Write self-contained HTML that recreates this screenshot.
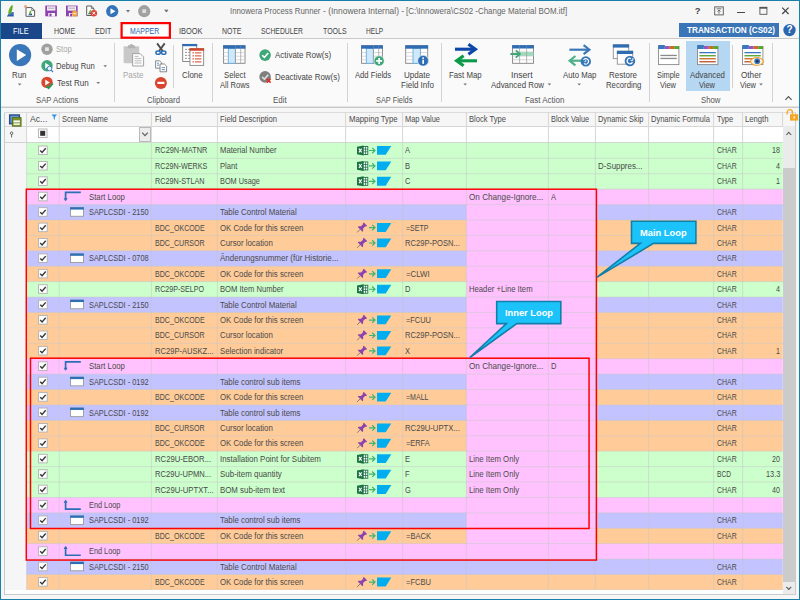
<!DOCTYPE html>
<html><head><meta charset="utf-8"><title>Innowera Process Runner</title>
<style>
html,body{margin:0;padding:0;}
body{width:800px;height:600px;overflow:hidden;position:relative;background:#f4f4f4;font-family:"Liberation Sans",sans-serif;}
#w{position:absolute;left:0;top:0;width:800px;height:600px;overflow:hidden;}
#w div,#w svg,#w span.t{position:absolute;}
#w span.t{white-space:nowrap;transform-origin:0 50%;}
#w svg{overflow:visible;}
</style></head><body><div id="w">
<div style="left:0px;top:0px;width:800px;height:600px;background:#f6f6f6;"></div>
<div style="left:1px;top:39.3px;width:798px;height:67px;background:#fafafa;"></div>
<div style="left:1px;top:38.4px;width:798px;height:0.9px;background:#c9c9c9;"></div>
<div style="left:1px;top:106px;width:798px;height:1px;background:#e4e4e4;"></div>
<div style="left:1px;top:107px;width:798px;height:1px;background:#c9c9c9;"></div>
<svg style="left:5px;top:3px;" width="12" height="16" viewBox="5 3 12 16"><path d="M6.8 16.5 L9.4 12.7 L13.7 12.1 V16.5 Z" fill="#2c5ca6"/><path d="M9 14.4 L13.7 13.6" stroke="#5f8fd0" stroke-width="0.7"/><path d="M8.1 13.4 C8.4 9.8 9.9 6.6 12.5 4.6 C12.9 7.8 12.2 11 10.5 13.9 Z" fill="#6ab42d"/><path d="M11.9 6.2 C11.7 8.8 10.8 11.4 9.6 13.4" stroke="#4a931c" stroke-width="0.7" fill="none"/></svg>
<svg style="left:23px;top:4px;" width="15" height="15" viewBox="23 4 15 15"><path d="M26 7.6 H31.8 L34.6 10.4 V16.3 H26 Z" fill="#fff" stroke="#5c5c5c" stroke-width="1"/><path d="M31.8 7.6 V10.4 H34.6" fill="none" stroke="#5c5c5c" stroke-width="0.8"/><path d="M28.2 15.2 L29.4 13.4 H32 V15.2 Z" fill="#2c5ca6"/><path d="M29 14 C29 12.2 29.9 10.8 31.2 10 C31.5 11.6 31.1 13 30.2 14.4 Z" fill="#6ab42d"/><path d="M24.2 5.2 L26.8 7.8 M26.8 5.2 L24.2 7.8 M25.5 4.8 V8.2 M23.9 6.5 H27.1" stroke="#f0906a" stroke-width="0.6"/></svg>
<svg style="left:45px;top:5px;" width="13" height="13" viewBox="-0.3 -0.6 13 13"><path d="M0 0 H11.6 V10.7 H0 Z" fill="#8c41ae"/><rect x="1.7" y="0.7" width="8.4" height="4.3" fill="#f3edf7"/><rect x="2.8" y="2" width="6.2" height="1.2" fill="#b5b5b5"/><rect x="2.9" y="7.4" width="6.8" height="3.3" fill="#f6f6f6"/><rect x="4.1" y="8" width="2.1" height="2.7" fill="#8c41ae"/></svg>
<svg style="left:66px;top:5px;" width="13" height="13" viewBox="0 -0.6 13 13"><path d="M0 0 H11.6 V10.7 H0 Z" fill="#8c41ae"/><rect x="1.7" y="0.7" width="8.4" height="4.3" fill="#f3edf7"/><rect x="2.8" y="2" width="6.2" height="1.2" fill="#b5b5b5"/><rect x="2.9" y="7.4" width="6.8" height="3.3" fill="#f6f6f6"/><rect x="4.1" y="8" width="2.1" height="2.7" fill="#8c41ae"/></svg>
<svg style="left:71px;top:10px;" width="8" height="8" viewBox="71 10 8 8"><rect x="72.2" y="10.6" width="4.9" height="5.8" rx="1.6" fill="#f1a437"/><rect x="73" y="12.9" width="3.3" height="1.3" fill="#fbe3b8"/></svg>
<svg style="left:85px;top:4px;" width="15" height="15" viewBox="85 4 15 15"><path d="M86.7 6 H91.4 L94 8.6 V15.5 H86.7 Z" fill="#fff" stroke="#5c5c5c" stroke-width="1"/><path d="M91.4 6 V8.6 H94" fill="none" stroke="#5c5c5c" stroke-width="0.8"/><path d="M88 14.2 L89 12.6 H91.2 V14.2 Z" fill="#2c5ca6"/><path d="M88.8 13.2 C88.8 11.6 89.6 10.2 90.8 9.4 C91.1 10.9 90.8 12.2 89.9 13.6 Z" fill="#6ab42d"/><circle cx="93.8" cy="13.2" r="3.3" fill="#dc4538"/><path d="M92.4 11.8 L95.2 14.6 M95.2 11.8 L92.4 14.6" stroke="#fff" stroke-width="1"/></svg>
<svg style="left:106px;top:5px;" width="14" height="14" viewBox="0 0 14 14"><circle cx="6.2" cy="6.2" r="6.1" fill="#3674b7"/><path d="M4.5 3.2 L9.4 6.2 L4.5 9.2 Z" fill="#fff"/></svg>
<svg style="left:125px;top:10px;" width="7" height="4" viewBox="-0.9 0 7 4"><path d="M0 0 H4.2 L2.1 2.4 Z" fill="#757575"/></svg>
<svg style="left:138px;top:5px;" width="14" height="14" viewBox="0 0 14 14"><circle cx="6.2" cy="6.2" r="6.1" fill="#a1a1a1"/><rect x="4.3" y="4.3" width="3.8" height="3.8" rx="0.4" fill="#dedede"/></svg>
<div style="left:164.3px;top:9px;width:4.2px;height:0.8px;background:#cdcdcd;"></div>
<svg style="left:164px;top:10px;" width="6" height="4" viewBox="-0.3 0 6 4"><path d="M0 0 H4.2 L2.1 2.4 Z" fill="#757575"/></svg>
<span class="t" style="left:229.5px;top:6.04px;font-size:8.6px;line-height:10.32px;color:#656565;transform:scaleX(0.9102);">Innowera Process Runner</span>
<span class="t" style="left:322.8px;top:6.04px;font-size:8.6px;line-height:10.32px;color:#656565;transform:scaleX(0.9820);">- (Innowera Internal) -</span>
<span class="t" style="left:406.25px;top:6.04px;font-size:8.6px;line-height:10.32px;color:#656565;transform:scaleX(0.9243);">[C:\Innowera\CS02 -Change Material BOM.itf]</span>
<span class="t" style="left:694.73px;top:4.66px;font-size:9.4px;line-height:11.28px;color:#444;transform:scaleX(1.0000);font-weight:bold;">?</span>
<svg style="left:714px;top:6px;" width="11" height="11" viewBox="-0.2 -0.4 11 11"><rect x="0.5" y="0.5" width="8.6" height="8" fill="none" stroke="#555" stroke-width="0.9"/><path d="M2.4 2.4 H7.2" stroke="#555" stroke-width="0.8"/><path d="M4.8 7.4 V3.6 M3.2 5.2 L4.8 3.6 L6.4 5.2" fill="none" stroke="#555" stroke-width="0.8"/></svg>
<div style="left:737.4px;top:12.2px;width:7.4px;height:1.1px;background:#4a4a4a;"></div>
<svg style="left:759px;top:6px;" width="10" height="10" viewBox="-0.4 -0.8 10 10"><rect x="0.5" y="0.5" width="7" height="7" fill="none" stroke="#555" stroke-width="0.9"/><rect x="0.3" y="0.2" width="7.4" height="1.7" fill="#555"/></svg>
<svg style="left:781px;top:7px;" width="10" height="9" viewBox="-0.6 0 10 9"><path d="M0.6 0.6 L7 7 M7 0.6 L0.6 7" stroke="#444" stroke-width="1.2"/></svg>
<div style="left:1px;top:22.6px;width:41px;height:16.2px;background:#19478a;"></div>
<span class="t" style="left:12.5px;top:26.24px;font-size:9.1px;line-height:10.92px;color:#fff;transform:scaleX(0.8117);">FILE</span>
<span class="t" style="left:53.8px;top:26.24px;font-size:9.1px;line-height:10.92px;color:#444444;transform:scaleX(0.7765);">HOME</span>
<span class="t" style="left:94.5px;top:26.24px;font-size:9.1px;line-height:10.92px;color:#444444;transform:scaleX(0.7863);">EDIT</span>
<div style="left:121px;top:23px;width:49px;height:15.4px;background:#fdfdfd;"></div>
<span class="t" style="left:130.3px;top:26.24px;font-size:9.1px;line-height:10.92px;color:#2a5fae;transform:scaleX(0.7598);">MAPPER</span>
<svg style="left:120px;top:22px;" width="52" height="18" viewBox="-0.5 0 52 18"><rect x="1.1" y="1.1" width="48.3" height="14.6" fill="none" stroke="#ff0000" stroke-width="2.2"/></svg>
<span class="t" style="left:179.3px;top:26.24px;font-size:9.1px;line-height:10.92px;color:#444444;transform:scaleX(0.8188);">IBOOK</span>
<span class="t" style="left:221.8px;top:26.24px;font-size:9.1px;line-height:10.92px;color:#444444;transform:scaleX(0.7674);">NOTE</span>
<span class="t" style="left:260.5px;top:26.24px;font-size:9.1px;line-height:10.92px;color:#444444;transform:scaleX(0.7483);">SCHEDULER</span>
<span class="t" style="left:322.5px;top:26.24px;font-size:9.1px;line-height:10.92px;color:#444444;transform:scaleX(0.7692);">TOOLS</span>
<span class="t" style="left:365.5px;top:26.24px;font-size:9.1px;line-height:10.92px;color:#444444;transform:scaleX(0.7235);">HELP</span>
<div style="left:679px;top:23px;width:100px;height:14.2px;background:#3a76b7;"></div>
<span class="t" style="left:687.2px;top:24.92px;font-size:8.8px;line-height:10.56px;color:#fff;transform:scaleX(0.9326);font-weight:bold;">TRANSACTION (CS02)</span>
<svg style="left:783px;top:23px;" width="14" height="15" viewBox="-0.2 -0.8 14 15"><circle cx="6.3" cy="6.3" r="6.2" fill="#2a67ae"/></svg>
<span class="t" style="left:786.45px;top:24.4px;font-size:10px;line-height:12px;color:#fff;transform:scaleX(1.0000);font-weight:bold;">?</span>
<div style="left:114px;top:43.2px;width:1px;height:58.4px;background:#d2d2d2;"></div>
<div style="left:212px;top:43.2px;width:1px;height:58.4px;background:#d2d2d2;"></div>
<div style="left:347.2px;top:43.2px;width:1px;height:58.4px;background:#d2d2d2;"></div>
<div style="left:441.2px;top:43.2px;width:1px;height:58.4px;background:#d2d2d2;"></div>
<div style="left:648.8px;top:43.2px;width:1px;height:58.4px;background:#d2d2d2;"></div>
<div style="left:771.7px;top:43.2px;width:1px;height:58.4px;background:#d2d2d2;"></div>
<div style="left:173px;top:45px;width:1px;height:42.5px;background:#d2d2d2;"></div>
<div style="left:731.5px;top:45px;width:1px;height:42.5px;background:#d2d2d2;"></div>
<span class="t" style="left:36.05px;top:94.86px;font-size:8.4px;line-height:10.08px;color:#555;transform:scaleX(0.9224);">SAP Actions</span>
<span class="t" style="left:146.5px;top:94.86px;font-size:8.4px;line-height:10.08px;color:#555;transform:scaleX(0.9178);">Clipboard</span>
<span class="t" style="left:273.3px;top:94.86px;font-size:8.4px;line-height:10.08px;color:#555;transform:scaleX(0.9534);">Edit</span>
<span class="t" style="left:376.25px;top:94.86px;font-size:8.4px;line-height:10.08px;color:#555;transform:scaleX(0.8817);">SAP Fields</span>
<span class="t" style="left:525.45px;top:94.86px;font-size:8.4px;line-height:10.08px;color:#555;transform:scaleX(0.9506);">Fast Action</span>
<span class="t" style="left:700.75px;top:94.86px;font-size:8.4px;line-height:10.08px;color:#555;transform:scaleX(0.9280);">Show</span>
<svg style="left:784px;top:95px;" width="10" height="7" viewBox="-0.8 -0.6 10 7"><path d="M0.6 4.2 L3.7 1 L6.8 4.2" fill="none" stroke="#555" stroke-width="1.2"/></svg>
<svg style="left:8px;top:43px;" width="25" height="25" viewBox="-0.8 -0.8 25 25"><circle cx="11.3" cy="11.3" r="11.1" fill="#3a77b9"/><path d="M8 5.4 L17.4 11.3 L8 17.2 Z" fill="#fff"/></svg>
<span class="t" style="left:11.6px;top:69.92px;font-size:8.8px;line-height:10.56px;color:#444444;transform:scaleX(0.8920);">Run</span>
<svg style="left:17px;top:83px;" width="6" height="4" viewBox="-0.8 -0.4 6 4"><path d="M0 0 H3.6 L1.8 2 Z" fill="#757575"/></svg>
<svg style="left:41px;top:43px;" width="13" height="13" viewBox="-0.2 -0.4 13 13"><circle cx="5.8" cy="5.8" r="5.7" fill="#a0a0a0"/><rect x="3.9" y="3.9" width="3.8" height="3.8" rx="0.4" fill="#e4e4e4"/></svg>
<span class="t" style="left:56.2px;top:44.12px;font-size:8.8px;line-height:10.56px;color:#a6a6a6;transform:scaleX(0.8617);">Stop</span>
<svg style="left:41px;top:60px;" width="14" height="14" viewBox="-0.2 0 14 14"><circle cx="5.8" cy="5.8" r="5.7" fill="#3fa77a"/><path d="M4 2.8 L8.6 5.8 L4 8.8 Z" fill="#fff" opacity="0.95"/><circle cx="8.3" cy="8.5" r="2.3" fill="#eaf2fb" stroke="#3a7ac0" stroke-width="0.9"/><path d="M10 10.2 L11.8 12" stroke="#3a7ac0" stroke-width="1.2"/></svg>
<span class="t" style="left:56.2px;top:60.72px;font-size:8.8px;line-height:10.56px;color:#444444;transform:scaleX(0.8715);">Debug Run</span>
<svg style="left:103px;top:65px;" width="6" height="4" viewBox="-0.4 -0.2 6 4"><path d="M0 0 H3.6 L1.8 2 Z" fill="#757575"/></svg>
<svg style="left:41px;top:76px;" width="14" height="15" viewBox="-0.2 -0.6 14 15"><circle cx="5.8" cy="5.8" r="5.7" fill="#d9472f"/><path d="M4 2.8 L8.6 5.8 L4 8.8 Z" fill="#fff" opacity="0.95"/><path d="M5 9.4 L7.4 11.6 L11.6 6.8" fill="none" stroke="#1e9e57" stroke-width="1.8"/></svg>
<span class="t" style="left:57px;top:77.52px;font-size:8.8px;line-height:10.56px;color:#444444;transform:scaleX(0.9099);">Test Run</span>
<svg style="left:96px;top:82px;" width="6" height="3" viewBox="-0.4 0 6 3"><path d="M0 0 H3.6 L1.8 2 Z" fill="#757575"/></svg>
<svg style="left:123px;top:43px;" width="24" height="25" viewBox="0 -0.6 24 25"><rect x="0.6" y="2.6" width="15.6" height="17" rx="1" fill="#c8c8c8"/><path d="M5 2.8 V1.6 H6.8 A1.7 1.7 0 0 1 10 1.6 H11.8 V2.8 L12.6 4.6 H4.2 Z" fill="#b3b3b3"/><path d="M9.6 10 H17.2 L20.6 13.4 V22.4 H9.6 Z" fill="#fbfbfb" stroke="#9a9a9a" stroke-width="0.9"/><path d="M11.6 15 H18.4 M11.6 17.2 H18.4 M11.6 19.4 H18.4 M11.6 12.8 H15.6" stroke="#ababab" stroke-width="0.8"/></svg>
<span class="t" style="left:123px;top:69.92px;font-size:8.8px;line-height:10.56px;color:#a6a6a6;transform:scaleX(0.9065);">Paste</span>
<svg style="left:155px;top:43px;" width="13" height="14" viewBox="-0.2 -0.2 13 14"><path d="M1.9 0.2 L7.5 7.8 M9.5 0.2 L3.9 7.8" stroke="#4d4d4d" stroke-width="1.9"/><ellipse cx="2.9" cy="9.5" rx="2.2" ry="1.6" fill="none" stroke="#2e6fb6" stroke-width="1.5"/><ellipse cx="8.5" cy="9.5" rx="2.2" ry="1.6" fill="none" stroke="#2e6fb6" stroke-width="1.5"/></svg>
<svg style="left:155px;top:60px;" width="14" height="14" viewBox="0 -0.2 14 14"><path d="M0.6 0.6 H4.6 L6.6 2.6 V8 H0.6 Z" fill="#fff" stroke="#7a7a7a" stroke-width="0.9"/><path d="M5 3.8 H9.4 L11.6 6 V11.6 H5 Z" fill="#fff" stroke="#7a7a7a" stroke-width="0.9"/><path d="M2 3 H4 M2 5 H4 M6.6 7.4 H10 M6.6 9.4 H10" stroke="#3a78bd" stroke-width="0.8"/></svg>
<svg style="left:154px;top:76px;" width="15" height="14" viewBox="-0.8 -0.8 15 14"><circle cx="6.1" cy="6.1" r="6" fill="#d9442e"/><rect x="2.6" y="5" width="7" height="2.2" fill="#fff"/></svg>
<svg style="left:181px;top:43px;" width="26" height="26" viewBox="181 43 26 26"><rect x="182.7" y="44.4" width="14" height="17" fill="#fff" stroke="#7a7a7a" stroke-width="0.9"/><rect x="182.25" y="44" width="14.9" height="2.2" fill="#2f6db3"/><path d="M185 49.4 H187 M188.2 49.4 H196 M185 52.4 H187 M188.2 52.4 H196 M185 55.4 H187 M188.2 55.4 H196 M185 58.4 H187 M188.2 58.4 H196" stroke="#8a8a8a" stroke-width="0.9"/><rect x="189.95" y="48.7" width="13.7" height="16.7" fill="#fff" stroke="#858585" stroke-width="0.9"/><rect x="189.5" y="48.25" width="14.6" height="2.5" fill="#cf4528"/><path d="M192.4 52.9 H194 M195 52.9 H201.4 M192.4 55.9 H194 M195 55.9 H201.4 M192.4 58.9 H194 M195 58.9 H201.4 M192.4 61.9 H194 M195 61.9 H201.4" stroke="#de6a54" stroke-width="1.3"/></svg>
<span class="t" style="left:182.1px;top:69.92px;font-size:8.8px;line-height:10.56px;color:#444444;transform:scaleX(0.8959);">Clone</span>
<svg style="left:223px;top:45px;" width="24" height="20" viewBox="-0.1 -0.2 24 20"><rect x="0.5" y="0.5" width="21.4" height="17.6" fill="#fff" stroke="#808080" stroke-width="0.9"/><path d="M0.5 7.4 H21.9 M0.5 11 H21.9 M0.5 14.6 H21.9" stroke="#c9c9c9" stroke-width="0.7"/><rect x="5.2" y="3" width="7" height="15.1" fill="#cfe8fa" stroke="#69ade2" stroke-width="0.9"/><rect x="0.1" y="0.1" width="22.2" height="3.4" fill="#2f6db3"/><path d="M12.4 3.4 V18" stroke="#9a9a9a" stroke-width="0.7"/><path d="M12.4 0.2 V3.4" stroke="#5f93cf" stroke-width="0.6"/><path d="M17.6 3.4 V18" stroke="#9a9a9a" stroke-width="0.7"/><path d="M17.6 0.2 V3.4" stroke="#5f93cf" stroke-width="0.6"/></svg>
<span class="t" style="left:223.6px;top:69.92px;font-size:8.8px;line-height:10.56px;color:#444444;transform:scaleX(0.8831);">Select</span>
<span class="t" style="left:219.8px;top:79.82px;font-size:8.8px;line-height:10.56px;color:#444444;transform:scaleX(0.8647);">All Rows</span>
<svg style="left:259px;top:49px;" width="13" height="14" viewBox="-0.2 -0.2 13 14"><circle cx="5.9" cy="5.9" r="5.8" fill="#3fa77a"/><path d="M3 6 L5.2 8.2 L9 3.8" fill="none" stroke="#fff" stroke-width="1.6"/></svg>
<span class="t" style="left:274.6px;top:49.92px;font-size:8.8px;line-height:10.56px;color:#444444;transform:scaleX(0.9121);">Activate Row(s)</span>
<svg style="left:259px;top:71px;" width="14" height="14" viewBox="-0.2 0 14 14"><circle cx="5.9" cy="5.9" r="5.8" fill="#7f7f7f"/><path d="M3 6 L5.2 8.2 L9 3.8" fill="none" stroke="#e4e4e4" stroke-width="1.6"/><path d="M7.6 7.8 L11.4 11.6 M11.4 7.8 L7.6 11.6" stroke="#e02b20" stroke-width="1.5"/></svg>
<span class="t" style="left:274.6px;top:71.92px;font-size:8.8px;line-height:10.56px;color:#444444;transform:scaleX(0.9014);">Deactivate Row(s)</span>
<svg style="left:361px;top:45px;" width="23" height="20" viewBox="-0.1 -0.2 23 20"><rect x="0.5" y="0.5" width="20.8" height="17.6" fill="#fff" stroke="#808080" stroke-width="0.9"/><path d="M0.5 7.4 H21.3 M0.5 11 H21.3 M0.5 14.6 H21.3" stroke="#c9c9c9" stroke-width="0.7"/><rect x="5.2" y="3" width="7" height="15.1" fill="#cfe8fa" stroke="#69ade2" stroke-width="0.9"/><rect x="0.1" y="0.1" width="21.6" height="3.4" fill="#2f6db3"/><path d="M12.4 3.4 V18" stroke="#9a9a9a" stroke-width="0.7"/><path d="M12.4 0.2 V3.4" stroke="#5f93cf" stroke-width="0.6"/><path d="M17.6 3.4 V18" stroke="#9a9a9a" stroke-width="0.7"/><path d="M17.6 0.2 V3.4" stroke="#5f93cf" stroke-width="0.6"/></svg>
<svg style="left:373px;top:55px;" width="13" height="13" viewBox="-0.9 -0.7 13 13"><circle cx="5.2" cy="5.2" r="5.1" fill="#3fa77a" stroke="#f5f5f5" stroke-width="0.6"/><path d="M5.2 2.2 V8.2 M2.2 5.2 H8.2" stroke="#fff" stroke-width="1.7"/></svg>
<span class="t" style="left:354.9px;top:69.92px;font-size:8.8px;line-height:10.56px;color:#444444;transform:scaleX(0.8707);">Add Fields</span>
<svg style="left:405px;top:45px;" width="25" height="20" viewBox="-0.2 -0.2 25 20"><rect x="0.5" y="0.5" width="22" height="17.6" fill="#fff" stroke="#808080" stroke-width="0.9"/><path d="M0.5 7.4 H22.5 M0.5 11 H22.5 M0.5 14.6 H22.5" stroke="#c9c9c9" stroke-width="0.7"/><rect x="7.8" y="3" width="7.4" height="15.1" fill="#cfe8fa" stroke="#69ade2" stroke-width="0.9"/><rect x="0.1" y="0.1" width="22.8" height="3.4" fill="#2f6db3"/></svg>
<svg style="left:417px;top:55px;" width="13" height="13" viewBox="-0.6 -0.2 13 13"><circle cx="5.5" cy="5.5" r="5.4" fill="#2e6fb6" stroke="#f5f5f5" stroke-width="0.6"/><rect x="4.7" y="4.6" width="1.7" height="4" fill="#fff"/><rect x="4.7" y="2.2" width="1.7" height="1.5" fill="#fff"/></svg>
<span class="t" style="left:404.2px;top:69.92px;font-size:8.8px;line-height:10.56px;color:#444444;transform:scaleX(0.9162);">Update</span>
<span class="t" style="left:401.1px;top:79.82px;font-size:8.8px;line-height:10.56px;color:#444444;transform:scaleX(0.9117);">Field Info</span>
<svg style="left:454px;top:43px;" width="25" height="25" viewBox="0 0 25 25"><path d="M1 6.2 H20" stroke="#0d47a8" stroke-width="3.1"/><path d="M14.4 1.2 L21.4 6.2 L14.4 11.2" fill="none" stroke="#0d47a8" stroke-width="3.1"/><path d="M23 17.8 H4" stroke="#0a9a4a" stroke-width="3.1"/><path d="M9.6 12.8 L2.6 17.8 L9.6 22.8" fill="none" stroke="#0a9a4a" stroke-width="3.1"/></svg>
<span class="t" style="left:448.9px;top:69.92px;font-size:8.8px;line-height:10.56px;color:#444444;transform:scaleX(0.8888);">Fast Map</span>
<svg style="left:463px;top:83px;" width="5" height="4" viewBox="-0.4 -0.4 5 4"><path d="M0 0 H3.6 L1.8 2 Z" fill="#757575"/></svg>
<svg style="left:509px;top:44px;" width="28" height="23" viewBox="509 44 28 23"><rect x="512.6" y="45.6" width="20.9" height="17.7" fill="#fff" stroke="#808080" stroke-width="0.9"/><path d="M512.6 52 H533.5 M512.6 56 H533.5 M512.6 59.8 H533.5" stroke="#c4c4c4" stroke-width="0.7"/><rect x="519.6" y="52" width="13.9" height="4" fill="#a3d9be"/><path d="M519.6 48.4 V63 M526.6 48.4 V63" stroke="#9a9a9a" stroke-width="0.7"/><rect x="512.2" y="45.2" width="21.7" height="3.3" fill="#2f6db3"/><path d="M519.6 45.3 V48.4 M526.6 45.3 V48.4" stroke="#5f93cf" stroke-width="0.6"/><path d="M510.4 54 H519 M515.8 50.4 L519.8 54 L515.8 57.6" fill="none" stroke="#3fa77a" stroke-width="1.9"/></svg>
<span class="t" style="left:510.8px;top:69.92px;font-size:8.8px;line-height:10.56px;color:#444444;transform:scaleX(0.9814);">Insert</span>
<span class="t" style="left:491.1px;top:79.82px;font-size:8.8px;line-height:10.56px;color:#444444;transform:scaleX(0.8954);">Advanced Row</span>
<svg style="left:547px;top:83px;" width="6" height="4" viewBox="-0.6 -0.4 6 4"><path d="M0 0 H3.6 L1.8 2 Z" fill="#757575"/></svg>
<svg style="left:567px;top:43px;" width="27" height="26" viewBox="567 43 27 26"><path d="M569.4 49.7 H588.4" stroke="#3b78b9" stroke-width="2.2"/><path d="M583.6 45.2 L589.4 49.7 L583.6 54.2" fill="none" stroke="#3b78b9" stroke-width="2.2"/><path d="M581 60.7 H571" stroke="#4db089" stroke-width="2.2"/><path d="M575.4 56 L569.6 60.7 L575.4 65.4" fill="none" stroke="#4db089" stroke-width="2.2"/><circle cx="585.8" cy="61.4" r="5.2" fill="#3676b8"/><circle cx="585.8" cy="61.4" r="2.7" fill="none" stroke="#fff" stroke-width="1.1" stroke-dasharray="13 4" transform="rotate(-150 585.8 61.4)"/><path d="M585.8 59.8 V61.6 H584.4" fill="none" stroke="#fff" stroke-width="0.8"/></svg>
<span class="t" style="left:562.7px;top:69.92px;font-size:8.8px;line-height:10.56px;color:#444444;transform:scaleX(0.8867);">Auto Map</span>
<svg style="left:577px;top:83px;" width="6" height="4" viewBox="-0.4 -0.4 6 4"><path d="M0 0 H3.6 L1.8 2 Z" fill="#757575"/></svg>
<svg style="left:611px;top:43px;" width="27" height="26" viewBox="611 43 27 26"><rect x="613.3" y="44.8" width="15.4" height="13.8" fill="#fff" stroke="#909090" stroke-width="0.9"/><rect x="612.9" y="44.4" width="16.2" height="3.2" fill="#2f6db3"/><rect x="617.3" y="51.2" width="15.4" height="13" fill="#fff" stroke="#909090" stroke-width="0.9"/><rect x="616.9" y="50.8" width="16.2" height="3.2" fill="#2f6db3"/><circle cx="629.9" cy="61" r="5.3" fill="#3676b8"/><circle cx="629.9" cy="61" r="2.7" fill="none" stroke="#fff" stroke-width="1.2" stroke-dasharray="12.5 4.5" transform="rotate(20 629.9 61)"/><path d="M632.9 58 V60.4 H630.6" fill="none" stroke="#fff" stroke-width="0.9"/></svg>
<span class="t" style="left:609.2px;top:69.92px;font-size:8.8px;line-height:10.56px;color:#444444;transform:scaleX(0.9087);">Restore</span>
<span class="t" style="left:605.7px;top:79.82px;font-size:8.8px;line-height:10.56px;color:#444444;transform:scaleX(0.8825);">Recording</span>
<svg style="left:658px;top:45px;" width="23" height="21" viewBox="0 0 23 21"><rect x="0.5" y="1.6" width="20.4" height="18" fill="#fff" stroke="#8a8a8a" stroke-width="0.9"/><rect x="0.2" y="0" width="6.6" height="4" fill="#3a78bd"/><rect x="6.8" y="1.2" width="4.8" height="2.8" fill="#9b4fc0"/><rect x="11.6" y="1.2" width="4.6" height="2.8" fill="#d2691e"/><rect x="16.2" y="1.2" width="5" height="2.8" fill="#55a630"/><rect x="2.4" y="9.8" width="16.4" height="1.3" fill="#8a8a8a"/><rect x="2.4" y="12.8" width="16.4" height="1.3" fill="#8a8a8a"/></svg>
<span class="t" style="left:656.9px;top:69.92px;font-size:8.8px;line-height:10.56px;color:#444444;transform:scaleX(0.8402);">Simple</span>
<span class="t" style="left:660.2px;top:79.82px;font-size:8.8px;line-height:10.56px;color:#444444;transform:scaleX(0.8459);">View</span>
<div style="left:685.5px;top:41px;width:44.2px;height:49.6px;background:#b5d7f2;"></div>
<svg style="left:697px;top:45px;" width="23" height="21" viewBox="0 0 23 21"><rect x="0.5" y="1.6" width="20.4" height="18" fill="#fff" stroke="#8a8a8a" stroke-width="0.9"/><rect x="0.2" y="0" width="6.6" height="4" fill="#3a78bd"/><rect x="6.8" y="1.2" width="4.8" height="2.8" fill="#9b4fc0"/><rect x="11.6" y="1.2" width="4.6" height="2.8" fill="#d2691e"/><rect x="16.2" y="1.2" width="5" height="2.8" fill="#55a630"/><rect x="2.4" y="7" width="16.4" height="1.3" fill="#3a78bd"/><rect x="2.4" y="10.1" width="16.4" height="1.3" fill="#4f9e2c"/><rect x="2.4" y="13.1" width="16.4" height="1.3" fill="#c8641f"/><rect x="2.4" y="16.1" width="16.4" height="1.3" fill="#b8502c"/></svg>
<span class="t" style="left:689.7px;top:69.92px;font-size:8.8px;line-height:10.56px;color:#444444;transform:scaleX(0.8942);">Advanced</span>
<span class="t" style="left:699.2px;top:79.82px;font-size:8.8px;line-height:10.56px;color:#444444;transform:scaleX(0.8459);">View</span>
<svg style="left:742px;top:45px;" width="23" height="21" viewBox="0 0 23 21"><rect x="0.5" y="1.6" width="20.4" height="18" fill="#fff" stroke="#8a8a8a" stroke-width="0.9"/><rect x="0.2" y="0" width="6.6" height="4" fill="#3a78bd"/><rect x="6.8" y="1.2" width="4.8" height="2.8" fill="#9b4fc0"/><rect x="11.6" y="1.2" width="4.6" height="2.8" fill="#d2691e"/><rect x="16.2" y="1.2" width="5" height="2.8" fill="#55a630"/><rect x="2.4" y="7" width="16.4" height="1.3" fill="#3a78bd"/><rect x="2.4" y="10.1" width="16.4" height="1.3" fill="#4f9e2c"/><rect x="2.4" y="13.1" width="16.4" height="1.3" fill="#c8641f"/><rect x="2.4" y="16.1" width="16.4" height="1.3" fill="#b8502c"/></svg>
<svg style="left:749px;top:56px;" width="17" height="12" viewBox="-0.6 -0.6 17 12"><path d="M0.6 4.8 C3.4 -0.4 11.2 -0.4 14 4.8 C11.2 10 3.4 10 0.6 4.8 Z" fill="#fdf3dc" stroke="#f0a030" stroke-width="1.1"/><circle cx="7.6" cy="4.6" r="2.9" fill="#3a78bd"/><circle cx="7.6" cy="4.6" r="1.3" fill="#1c2f55"/></svg>
<span class="t" style="left:741.4px;top:69.92px;font-size:8.8px;line-height:10.56px;color:#444444;transform:scaleX(0.9269);">Other</span>
<span class="t" style="left:739.6px;top:79.82px;font-size:8.8px;line-height:10.56px;color:#444444;transform:scaleX(0.8459);">View</span>
<svg style="left:759px;top:83px;" width="5" height="4" viewBox="-0.2 -0.4 5 4"><path d="M0 0 H3.6 L1.8 2 Z" fill="#757575"/></svg>
<div style="left:4.4px;top:111.7px;width:791.6px;height:483.1px;background:#ffffff;box-sizing:border-box;border:1px solid #cbcbcb;"></div>
<div style="left:4.4px;top:111.7px;width:791.6px;height:1px;background:#dbdbdb;"></div>
<div style="left:4.9px;top:112.7px;width:777.7px;height:13.6px;background:#f6f6f6;"></div>
<div style="left:782.6px;top:112.7px;width:12.6px;height:13.6px;background:#f6f6f6;"></div>
<div style="left:4.9px;top:126.3px;width:21.7px;height:16.5px;background:#f6f6f6;"></div>
<div style="left:4.9px;top:142.8px;width:21.7px;height:447.11px;background:#f6f6f6;"></div>
<div style="left:4.9px;top:126px;width:777.7px;height:1px;background:#d6d6d6;"></div>
<div style="left:4.9px;top:142px;width:777.7px;height:1px;background:#d2d2d2;"></div>
<svg style="left:0;top:0;" width="800" height="600" viewBox="0 0 800 600"><rect x="26.6" y="142.9" width="756.2" height="16.41" fill="#ccffcc"/><rect x="26.6" y="158.31" width="756.2" height="16.41" fill="#ccffcc"/><rect x="26.6" y="173.73" width="756.2" height="16.41" fill="#ccffcc"/><rect x="26.6" y="189.14" width="756.2" height="16.41" fill="#ffc2ff"/><rect x="26.6" y="204.56" width="756.2" height="16.41" fill="#c3c3ff"/><rect x="26.6" y="219.97" width="756.2" height="16.41" fill="#ffcc99"/><rect x="26.6" y="235.38" width="756.2" height="16.41" fill="#ffcc99"/><rect x="26.6" y="250.8" width="756.2" height="16.41" fill="#c3c3ff"/><rect x="26.6" y="266.21" width="756.2" height="16.41" fill="#ffcc99"/><rect x="26.6" y="281.63" width="756.2" height="16.41" fill="#ccffcc"/><rect x="26.6" y="297.04" width="756.2" height="16.41" fill="#c3c3ff"/><rect x="26.6" y="312.45" width="756.2" height="16.41" fill="#ffcc99"/><rect x="26.6" y="327.87" width="756.2" height="16.41" fill="#ffcc99"/><rect x="26.6" y="343.28" width="756.2" height="16.41" fill="#ffcc99"/><rect x="26.6" y="358.7" width="756.2" height="16.41" fill="#ffc2ff"/><rect x="26.6" y="374.11" width="756.2" height="16.41" fill="#c3c3ff"/><rect x="26.6" y="389.52" width="756.2" height="16.41" fill="#ffcc99"/><rect x="26.6" y="404.94" width="756.2" height="16.41" fill="#c3c3ff"/><rect x="26.6" y="420.35" width="756.2" height="16.41" fill="#ffcc99"/><rect x="26.6" y="435.77" width="756.2" height="16.41" fill="#ffcc99"/><rect x="26.6" y="451.18" width="756.2" height="16.41" fill="#ccffcc"/><rect x="26.6" y="466.59" width="756.2" height="16.41" fill="#ccffcc"/><rect x="26.6" y="482.01" width="756.2" height="16.41" fill="#ccffcc"/><rect x="26.6" y="497.42" width="756.2" height="16.41" fill="#ffc2ff"/><rect x="26.6" y="512.84" width="756.2" height="16.41" fill="#c3c3ff"/><rect x="26.6" y="528.25" width="756.2" height="16.41" fill="#ffcc99"/><rect x="26.6" y="543.66" width="756.2" height="16.41" fill="#ffc2ff"/><rect x="26.6" y="559.08" width="756.2" height="16.41" fill="#c3c3ff"/><rect x="26.6" y="574.49" width="756.2" height="15.41" fill="#ffcc99"/><rect x="466.4" y="189.14" width="129" height="369.94" fill="#ffc2ff"/><rect x="26.6" y="157.81" width="756" height="1" fill="rgba(200,200,200,0.52)"/><rect x="26.6" y="173.23" width="756" height="1" fill="rgba(200,200,200,0.52)"/><rect x="26.6" y="188.64" width="756" height="1" fill="rgba(200,200,200,0.52)"/><rect x="26.6" y="204.06" width="756" height="1" fill="rgba(200,200,200,0.52)"/><rect x="26.6" y="219.47" width="756" height="1" fill="rgba(200,200,200,0.52)"/><rect x="26.6" y="234.88" width="756" height="1" fill="rgba(200,200,200,0.52)"/><rect x="26.6" y="250.3" width="756" height="1" fill="rgba(200,200,200,0.52)"/><rect x="26.6" y="265.71" width="756" height="1" fill="rgba(200,200,200,0.52)"/><rect x="26.6" y="281.13" width="756" height="1" fill="rgba(200,200,200,0.52)"/><rect x="26.6" y="296.54" width="756" height="1" fill="rgba(200,200,200,0.52)"/><rect x="26.6" y="311.95" width="756" height="1" fill="rgba(200,200,200,0.52)"/><rect x="26.6" y="327.37" width="756" height="1" fill="rgba(200,200,200,0.52)"/><rect x="26.6" y="342.78" width="756" height="1" fill="rgba(200,200,200,0.52)"/><rect x="26.6" y="358.2" width="756" height="1" fill="rgba(200,200,200,0.52)"/><rect x="26.6" y="373.61" width="756" height="1" fill="rgba(200,200,200,0.52)"/><rect x="26.6" y="389.02" width="756" height="1" fill="rgba(200,200,200,0.52)"/><rect x="26.6" y="404.44" width="756" height="1" fill="rgba(200,200,200,0.52)"/><rect x="26.6" y="419.85" width="756" height="1" fill="rgba(200,200,200,0.52)"/><rect x="26.6" y="435.27" width="756" height="1" fill="rgba(200,200,200,0.52)"/><rect x="26.6" y="450.68" width="756" height="1" fill="rgba(200,200,200,0.52)"/><rect x="26.6" y="466.09" width="756" height="1" fill="rgba(200,200,200,0.52)"/><rect x="26.6" y="481.51" width="756" height="1" fill="rgba(200,200,200,0.52)"/><rect x="26.6" y="496.92" width="756" height="1" fill="rgba(200,200,200,0.52)"/><rect x="26.6" y="512.34" width="756" height="1" fill="rgba(200,200,200,0.52)"/><rect x="26.6" y="527.75" width="756" height="1" fill="rgba(200,200,200,0.52)"/><rect x="26.6" y="543.16" width="756" height="1" fill="rgba(200,200,200,0.52)"/><rect x="26.6" y="558.58" width="756" height="1" fill="rgba(200,200,200,0.52)"/><rect x="26.6" y="573.99" width="756" height="1" fill="rgba(200,200,200,0.52)"/><rect x="26.6" y="589.41" width="756" height="1" fill="rgba(200,200,200,0.52)"/><rect x="26.1" y="112.7" width="1" height="30.1" fill="#d6d6d6"/><rect x="26.1" y="142.8" width="1" height="447.11" fill="rgba(200,200,200,0.52)"/><rect x="58.7" y="112.7" width="1" height="30.1" fill="#d6d6d6"/><rect x="58.7" y="142.8" width="1" height="447.11" fill="rgba(200,200,200,0.52)"/><rect x="150.9" y="112.7" width="1" height="30.1" fill="#d6d6d6"/><rect x="150.9" y="142.8" width="1" height="447.11" fill="rgba(200,200,200,0.52)"/><rect x="216.9" y="112.7" width="1" height="30.1" fill="#d6d6d6"/><rect x="216.9" y="142.8" width="1" height="447.11" fill="rgba(200,200,200,0.52)"/><rect x="345.1" y="112.7" width="1" height="30.1" fill="#d6d6d6"/><rect x="345.1" y="142.8" width="1" height="447.11" fill="rgba(200,200,200,0.52)"/><rect x="402.1" y="112.7" width="1" height="30.1" fill="#d6d6d6"/><rect x="402.1" y="142.8" width="1" height="447.11" fill="rgba(200,200,200,0.52)"/><rect x="465.9" y="112.7" width="1" height="30.1" fill="#d6d6d6"/><rect x="465.9" y="142.8" width="1" height="447.11" fill="rgba(200,200,200,0.52)"/><rect x="547.9" y="112.7" width="1" height="30.1" fill="#d6d6d6"/><rect x="547.9" y="142.8" width="1" height="447.11" fill="rgba(200,200,200,0.52)"/><rect x="594.9" y="112.7" width="1" height="30.1" fill="#d6d6d6"/><rect x="594.9" y="142.8" width="1" height="447.11" fill="rgba(200,200,200,0.52)"/><rect x="648.1" y="112.7" width="1" height="30.1" fill="#d6d6d6"/><rect x="648.1" y="142.8" width="1" height="447.11" fill="rgba(200,200,200,0.52)"/><rect x="713.1" y="112.7" width="1" height="30.1" fill="#d6d6d6"/><rect x="713.1" y="142.8" width="1" height="447.11" fill="rgba(200,200,200,0.52)"/><rect x="742.1" y="112.7" width="1" height="30.1" fill="#d6d6d6"/><rect x="742.1" y="142.8" width="1" height="447.11" fill="rgba(200,200,200,0.52)"/><rect x="782.1" y="112.7" width="1" height="13.6" fill="#d6d6d6"/></svg>
<span class="t" style="left:29.8px;top:114.26px;font-size:8.4px;line-height:10.08px;color:#4a4a4a;transform:scaleX(1.0355);">Ac...</span>
<span class="t" style="left:61.8px;top:114.26px;font-size:8.4px;line-height:10.08px;color:#4a4a4a;transform:scaleX(0.8996);">Screen Name</span>
<span class="t" style="left:154.5px;top:114.26px;font-size:8.4px;line-height:10.08px;color:#4a4a4a;transform:scaleX(0.8897);">Field</span>
<span class="t" style="left:219.8px;top:114.26px;font-size:8.4px;line-height:10.08px;color:#4a4a4a;transform:scaleX(0.9143);">Field Description</span>
<span class="t" style="left:348.75px;top:114.26px;font-size:8.4px;line-height:10.08px;color:#4a4a4a;transform:scaleX(0.9265);">Mapping Type</span>
<span class="t" style="left:405.4px;top:114.26px;font-size:8.4px;line-height:10.08px;color:#4a4a4a;transform:scaleX(0.8853);">Map Value</span>
<span class="t" style="left:469px;top:114.26px;font-size:8.4px;line-height:10.08px;color:#4a4a4a;transform:scaleX(0.9039);">Block Type</span>
<span class="t" style="left:551.4px;top:114.26px;font-size:8.4px;line-height:10.08px;color:#4a4a4a;transform:scaleX(0.8734);">Block Value</span>
<span class="t" style="left:598.4px;top:114.26px;font-size:8.4px;line-height:10.08px;color:#4a4a4a;transform:scaleX(0.8880);">Dynamic Skip</span>
<span class="t" style="left:651.4px;top:114.26px;font-size:8.4px;line-height:10.08px;color:#4a4a4a;transform:scaleX(0.8964);">Dynamic Formula</span>
<span class="t" style="left:717.4px;top:114.26px;font-size:8.4px;line-height:10.08px;color:#4a4a4a;transform:scaleX(0.8895);">Type</span>
<span class="t" style="left:745.4px;top:114.26px;font-size:8.4px;line-height:10.08px;color:#4a4a4a;transform:scaleX(0.9185);">Length</span>
<svg style="left:38px;top:145px;" width="11" height="12" viewBox="-0.1 -0.507 11 12"><rect x="0.5" y="0.5" width="8.6" height="8.6" fill="#fff" stroke="#b0b0b0" stroke-width="0.9"/><path d="M2.1 5 L4 6.9 L7.6 2.7" fill="none" stroke="#383838" stroke-width="1.4"/></svg>
<span class="t" style="left:154.5px;top:145.47px;font-size:8.4px;line-height:10.08px;color:#4a4a4a;transform:scaleX(0.8811);">RC29N-MATNR</span>
<span class="t" style="left:220px;top:145.47px;font-size:8.4px;line-height:10.08px;color:#4a4a4a;transform:scaleX(0.9140);">Material Number</span>
<svg style="left:357px;top:145px;" width="12" height="12" viewBox="0 -0.507 12 12"><path d="M0 1.2 L6.6 0 V10 L0 8.8 Z" fill="#1e7145"/><rect x="6.2" y="1" width="4.6" height="8" fill="#fff" stroke="#1e7145" stroke-width="0.9"/><path d="M6.2 3.6 H10.8 M6.2 6.3 H10.8 M8.6 1 V9" stroke="#1e7145" stroke-width="0.8"/><path d="M1.9 3.1 L4.7 6.9 M4.7 3.1 L1.9 6.9" stroke="#fff" stroke-width="1.1"/></svg>
<svg style="left:369px;top:145px;" width="24" height="12" viewBox="0 -0.507 24 12"><path d="M0 5 H5.6 M3.2 2.3 L6 5 L3.2 7.7" fill="none" stroke="#3cb371" stroke-width="1.2"/><path d="M8 0.5 H22.3 L16.7 9.3 H8 Z" fill="#00aeef"/></svg>
<span class="t" style="left:405px;top:145.47px;font-size:8.4px;line-height:10.08px;color:#4a4a4a;transform:scaleX(0.9000);">A</span>
<span class="t" style="left:717px;top:145.47px;font-size:8.4px;line-height:10.08px;color:#4a4a4a;transform:scaleX(0.8298);">CHAR</span>
<span class="t" style="left:771.86px;top:145.47px;font-size:8.4px;line-height:10.08px;color:#4a4a4a;transform:scaleX(0.8500);">18</span>
<svg style="left:38px;top:160px;" width="11" height="12" viewBox="-0.1 -0.921 11 12"><rect x="0.5" y="0.5" width="8.6" height="8.6" fill="#fff" stroke="#b0b0b0" stroke-width="0.9"/><path d="M2.1 5 L4 6.9 L7.6 2.7" fill="none" stroke="#383838" stroke-width="1.4"/></svg>
<span class="t" style="left:154.5px;top:160.88px;font-size:8.4px;line-height:10.08px;color:#4a4a4a;transform:scaleX(0.8586);">RC29N-WERKS</span>
<span class="t" style="left:220px;top:160.88px;font-size:8.4px;line-height:10.08px;color:#4a4a4a;transform:scaleX(0.9140);">Plant</span>
<svg style="left:357px;top:160px;" width="12" height="12" viewBox="0 -0.921 12 12"><path d="M0 1.2 L6.6 0 V10 L0 8.8 Z" fill="#1e7145"/><rect x="6.2" y="1" width="4.6" height="8" fill="#fff" stroke="#1e7145" stroke-width="0.9"/><path d="M6.2 3.6 H10.8 M6.2 6.3 H10.8 M8.6 1 V9" stroke="#1e7145" stroke-width="0.8"/><path d="M1.9 3.1 L4.7 6.9 M4.7 3.1 L1.9 6.9" stroke="#fff" stroke-width="1.1"/></svg>
<svg style="left:369px;top:160px;" width="24" height="12" viewBox="0 -0.921 24 12"><path d="M0 5 H5.6 M3.2 2.3 L6 5 L3.2 7.7" fill="none" stroke="#3cb371" stroke-width="1.2"/><path d="M8 0.5 H22.3 L16.7 9.3 H8 Z" fill="#00aeef"/></svg>
<span class="t" style="left:405px;top:160.88px;font-size:8.4px;line-height:10.08px;color:#4a4a4a;transform:scaleX(0.9000);">B</span>
<span class="t" style="left:598.4px;top:160.88px;font-size:8.4px;line-height:10.08px;color:#4a4a4a;transform:scaleX(0.9459);">D-Suppres...</span>
<span class="t" style="left:717px;top:160.88px;font-size:8.4px;line-height:10.08px;color:#4a4a4a;transform:scaleX(0.8298);">CHAR</span>
<span class="t" style="left:775.83px;top:160.88px;font-size:8.4px;line-height:10.08px;color:#4a4a4a;transform:scaleX(0.8500);">4</span>
<svg style="left:38px;top:176px;" width="11" height="11" viewBox="-0.1 -0.335 11 11"><rect x="0.5" y="0.5" width="8.6" height="8.6" fill="#fff" stroke="#b0b0b0" stroke-width="0.9"/><path d="M2.1 5 L4 6.9 L7.6 2.7" fill="none" stroke="#383838" stroke-width="1.4"/></svg>
<span class="t" style="left:154.5px;top:176.3px;font-size:8.4px;line-height:10.08px;color:#4a4a4a;transform:scaleX(0.8665);">RC29N-STLAN</span>
<span class="t" style="left:220px;top:176.3px;font-size:8.4px;line-height:10.08px;color:#4a4a4a;transform:scaleX(0.8743);">BOM Usage</span>
<svg style="left:357px;top:176px;" width="12" height="12" viewBox="0 -0.335 12 12"><path d="M0 1.2 L6.6 0 V10 L0 8.8 Z" fill="#1e7145"/><rect x="6.2" y="1" width="4.6" height="8" fill="#fff" stroke="#1e7145" stroke-width="0.9"/><path d="M6.2 3.6 H10.8 M6.2 6.3 H10.8 M8.6 1 V9" stroke="#1e7145" stroke-width="0.8"/><path d="M1.9 3.1 L4.7 6.9 M4.7 3.1 L1.9 6.9" stroke="#fff" stroke-width="1.1"/></svg>
<svg style="left:369px;top:176px;" width="24" height="12" viewBox="0 -0.335 24 12"><path d="M0 5 H5.6 M3.2 2.3 L6 5 L3.2 7.7" fill="none" stroke="#3cb371" stroke-width="1.2"/><path d="M8 0.5 H22.3 L16.7 9.3 H8 Z" fill="#00aeef"/></svg>
<span class="t" style="left:405px;top:176.3px;font-size:8.4px;line-height:10.08px;color:#4a4a4a;transform:scaleX(0.9000);">C</span>
<span class="t" style="left:717px;top:176.3px;font-size:8.4px;line-height:10.08px;color:#4a4a4a;transform:scaleX(0.8298);">CHAR</span>
<span class="t" style="left:775.83px;top:176.3px;font-size:8.4px;line-height:10.08px;color:#4a4a4a;transform:scaleX(0.8500);">1</span>
<svg style="left:38px;top:191px;" width="11" height="12" viewBox="-0.1 -0.749 11 12"><rect x="0.5" y="0.5" width="8.6" height="8.6" fill="#fff" stroke="#b0b0b0" stroke-width="0.9"/><path d="M2.1 5 L4 6.9 L7.6 2.7" fill="none" stroke="#383838" stroke-width="1.4"/></svg>
<svg style="left:64px;top:191px;" width="19" height="13" viewBox="-0.8 -0.299 19 13"><path d="M0.8 9 V1 H16" fill="none" stroke="#2d6fb3" stroke-width="1.7"/><path d="M-1.2 7 H2.8 L0.8 10 Z" fill="#2d6fb3"/></svg>
<span class="t" style="left:88.7px;top:191.71px;font-size:8.4px;line-height:10.08px;color:#4a4a4a;transform:scaleX(0.9288);">Start Loop</span>
<span class="t" style="left:469.25px;top:191.71px;font-size:8.4px;line-height:10.08px;color:#4a4a4a;transform:scaleX(0.9728);">On Change-Ignore...</span>
<span class="t" style="left:551.2px;top:191.71px;font-size:8.4px;line-height:10.08px;color:#4a4a4a;transform:scaleX(0.9000);">A</span>
<svg style="left:38px;top:207px;" width="11" height="11" viewBox="-0.1 -0.163 11 11"><rect x="0.5" y="0.5" width="8.6" height="8.6" fill="#fff" stroke="#b0b0b0" stroke-width="0.9"/><path d="M2.1 5 L4 6.9 L7.6 2.7" fill="none" stroke="#383838" stroke-width="1.4"/></svg>
<svg style="left:70px;top:207px;" width="15" height="12" viewBox="0 -0.163 15 12"><rect x="0.5" y="0.5" width="13" height="8.6" fill="#fff" stroke="#9a9a9a" stroke-width="0.9"/><rect x="0.1" y="0.1" width="13.8" height="2.3" fill="#2d6fb3"/></svg>
<span class="t" style="left:88.7px;top:207.12px;font-size:8.4px;line-height:10.08px;color:#4a4a4a;transform:scaleX(0.8833);">SAPLCSDI - 2150</span>
<span class="t" style="left:220px;top:207.12px;font-size:8.4px;line-height:10.08px;color:#4a4a4a;transform:scaleX(0.9424);">Table Control Material</span>
<span class="t" style="left:717px;top:207.12px;font-size:8.4px;line-height:10.08px;color:#4a4a4a;transform:scaleX(0.8298);">CHAR</span>
<svg style="left:38px;top:222px;" width="11" height="12" viewBox="-0.1 -0.577 11 12"><rect x="0.5" y="0.5" width="8.6" height="8.6" fill="#fff" stroke="#b0b0b0" stroke-width="0.9"/><path d="M2.1 5 L4 6.9 L7.6 2.7" fill="none" stroke="#383838" stroke-width="1.4"/></svg>
<span class="t" style="left:154.5px;top:222.54px;font-size:8.4px;line-height:10.08px;color:#4a4a4a;transform:scaleX(0.8459);">BDC_OKCODE</span>
<span class="t" style="left:220px;top:222.54px;font-size:8.4px;line-height:10.08px;color:#4a4a4a;transform:scaleX(0.9326);">OK Code for this screen</span>
<svg style="left:356px;top:222px;" width="12" height="12" viewBox="-0.5 -0.977 12 12"><g transform="rotate(45 5 5)"><path d="M2.7 -0.6 H7.3 V0.7 L6.5 1.4 V4.2 L8.3 6 V7 H1.7 V6 L3.5 4.2 V1.4 L2.7 0.7 Z" fill="#8b43ad"/><path d="M5 7 V11.2" stroke="#777" stroke-width="0.9"/></g></svg>
<svg style="left:369px;top:222px;" width="24" height="12" viewBox="0 -0.577 24 12"><path d="M0 5 H5.6 M3.2 2.3 L6 5 L3.2 7.7" fill="none" stroke="#3cb371" stroke-width="1.2"/><path d="M8 0.5 H22.3 L16.7 9.3 H8 Z" fill="#00aeef"/></svg>
<span class="t" style="left:406.2px;top:222.54px;font-size:8.4px;line-height:10.08px;color:#4a4a4a;transform:scaleX(0.8381);">=SETP</span>
<span class="t" style="left:717px;top:222.54px;font-size:8.4px;line-height:10.08px;color:#4a4a4a;transform:scaleX(0.8298);">CHAR</span>
<svg style="left:38px;top:237px;" width="11" height="12" viewBox="-0.1 -0.991 11 12"><rect x="0.5" y="0.5" width="8.6" height="8.6" fill="#fff" stroke="#b0b0b0" stroke-width="0.9"/><path d="M2.1 5 L4 6.9 L7.6 2.7" fill="none" stroke="#383838" stroke-width="1.4"/></svg>
<span class="t" style="left:154.5px;top:237.95px;font-size:8.4px;line-height:10.08px;color:#4a4a4a;transform:scaleX(0.8459);">BDC_CURSOR</span>
<span class="t" style="left:220px;top:237.95px;font-size:8.4px;line-height:10.08px;color:#4a4a4a;transform:scaleX(0.9382);">Cursor location</span>
<svg style="left:356px;top:238px;" width="12" height="12" viewBox="-0.5 -0.391 12 12"><g transform="rotate(45 5 5)"><path d="M2.7 -0.6 H7.3 V0.7 L6.5 1.4 V4.2 L8.3 6 V7 H1.7 V6 L3.5 4.2 V1.4 L2.7 0.7 Z" fill="#8b43ad"/><path d="M5 7 V11.2" stroke="#777" stroke-width="0.9"/></g></svg>
<svg style="left:369px;top:237px;" width="24" height="12" viewBox="0 -0.991 24 12"><path d="M0 5 H5.6 M3.2 2.3 L6 5 L3.2 7.7" fill="none" stroke="#3cb371" stroke-width="1.2"/><path d="M8 0.5 H22.3 L16.7 9.3 H8 Z" fill="#00aeef"/></svg>
<span class="t" style="left:405px;top:237.95px;font-size:8.4px;line-height:10.08px;color:#4a4a4a;transform:scaleX(0.9063);">RC29P-POSN...</span>
<span class="t" style="left:717px;top:237.95px;font-size:8.4px;line-height:10.08px;color:#4a4a4a;transform:scaleX(0.8298);">CHAR</span>
<svg style="left:38px;top:253px;" width="11" height="12" viewBox="-0.1 -0.405 11 12"><rect x="0.5" y="0.5" width="8.6" height="8.6" fill="#fff" stroke="#b0b0b0" stroke-width="0.9"/><path d="M2.1 5 L4 6.9 L7.6 2.7" fill="none" stroke="#383838" stroke-width="1.4"/></svg>
<svg style="left:70px;top:253px;" width="15" height="12" viewBox="0 -0.405 15 12"><rect x="0.5" y="0.5" width="13" height="8.6" fill="#fff" stroke="#9a9a9a" stroke-width="0.9"/><rect x="0.1" y="0.1" width="13.8" height="2.3" fill="#2d6fb3"/></svg>
<span class="t" style="left:88.7px;top:253.36px;font-size:8.4px;line-height:10.08px;color:#4a4a4a;transform:scaleX(0.8833);">SAPLCSDI - 0708</span>
<span class="t" style="left:220px;top:253.36px;font-size:8.4px;line-height:10.08px;color:#4a4a4a;transform:scaleX(0.9563);">Änderungsnummer (für Historie...</span>
<span class="t" style="left:717px;top:253.36px;font-size:8.4px;line-height:10.08px;color:#4a4a4a;transform:scaleX(0.8298);">CHAR</span>
<svg style="left:38px;top:268px;" width="11" height="12" viewBox="-0.1 -0.819 11 12"><rect x="0.5" y="0.5" width="8.6" height="8.6" fill="#fff" stroke="#b0b0b0" stroke-width="0.9"/><path d="M2.1 5 L4 6.9 L7.6 2.7" fill="none" stroke="#383838" stroke-width="1.4"/></svg>
<span class="t" style="left:154.5px;top:268.78px;font-size:8.4px;line-height:10.08px;color:#4a4a4a;transform:scaleX(0.8459);">BDC_OKCODE</span>
<span class="t" style="left:220px;top:268.78px;font-size:8.4px;line-height:10.08px;color:#4a4a4a;transform:scaleX(0.9326);">OK Code for this screen</span>
<svg style="left:356px;top:269px;" width="12" height="12" viewBox="-0.5 -0.219 12 12"><g transform="rotate(45 5 5)"><path d="M2.7 -0.6 H7.3 V0.7 L6.5 1.4 V4.2 L8.3 6 V7 H1.7 V6 L3.5 4.2 V1.4 L2.7 0.7 Z" fill="#8b43ad"/><path d="M5 7 V11.2" stroke="#777" stroke-width="0.9"/></g></svg>
<svg style="left:369px;top:268px;" width="24" height="12" viewBox="0 -0.819 24 12"><path d="M0 5 H5.6 M3.2 2.3 L6 5 L3.2 7.7" fill="none" stroke="#3cb371" stroke-width="1.2"/><path d="M8 0.5 H22.3 L16.7 9.3 H8 Z" fill="#00aeef"/></svg>
<span class="t" style="left:406.2px;top:268.78px;font-size:8.4px;line-height:10.08px;color:#4a4a4a;transform:scaleX(0.9394);">=CLWI</span>
<span class="t" style="left:717px;top:268.78px;font-size:8.4px;line-height:10.08px;color:#4a4a4a;transform:scaleX(0.8298);">CHAR</span>
<svg style="left:38px;top:284px;" width="11" height="11" viewBox="-0.1 -0.233 11 11"><rect x="0.5" y="0.5" width="8.6" height="8.6" fill="#fff" stroke="#b0b0b0" stroke-width="0.9"/><path d="M2.1 5 L4 6.9 L7.6 2.7" fill="none" stroke="#383838" stroke-width="1.4"/></svg>
<span class="t" style="left:154.5px;top:284.19px;font-size:8.4px;line-height:10.08px;color:#4a4a4a;transform:scaleX(0.8507);">RC29P-SELPO</span>
<span class="t" style="left:220px;top:284.19px;font-size:8.4px;line-height:10.08px;color:#4a4a4a;transform:scaleX(0.9105);">BOM Item Number</span>
<svg style="left:357px;top:284px;" width="12" height="12" viewBox="0 -0.233 12 12"><path d="M0 1.2 L6.6 0 V10 L0 8.8 Z" fill="#1e7145"/><rect x="6.2" y="1" width="4.6" height="8" fill="#fff" stroke="#1e7145" stroke-width="0.9"/><path d="M6.2 3.6 H10.8 M6.2 6.3 H10.8 M8.6 1 V9" stroke="#1e7145" stroke-width="0.8"/><path d="M1.9 3.1 L4.7 6.9 M4.7 3.1 L1.9 6.9" stroke="#fff" stroke-width="1.1"/></svg>
<svg style="left:369px;top:284px;" width="24" height="12" viewBox="0 -0.233 24 12"><path d="M0 5 H5.6 M3.2 2.3 L6 5 L3.2 7.7" fill="none" stroke="#3cb371" stroke-width="1.2"/><path d="M8 0.5 H22.3 L16.7 9.3 H8 Z" fill="#00aeef"/></svg>
<span class="t" style="left:405px;top:284.19px;font-size:8.4px;line-height:10.08px;color:#4a4a4a;transform:scaleX(0.9000);">D</span>
<span class="t" style="left:469.25px;top:284.19px;font-size:8.4px;line-height:10.08px;color:#4a4a4a;transform:scaleX(0.9193);">Header +Line Item</span>
<span class="t" style="left:717px;top:284.19px;font-size:8.4px;line-height:10.08px;color:#4a4a4a;transform:scaleX(0.8298);">CHAR</span>
<span class="t" style="left:775.83px;top:284.19px;font-size:8.4px;line-height:10.08px;color:#4a4a4a;transform:scaleX(0.8500);">4</span>
<svg style="left:38px;top:299px;" width="11" height="12" viewBox="-0.1 -0.647 11 12"><rect x="0.5" y="0.5" width="8.6" height="8.6" fill="#fff" stroke="#b0b0b0" stroke-width="0.9"/><path d="M2.1 5 L4 6.9 L7.6 2.7" fill="none" stroke="#383838" stroke-width="1.4"/></svg>
<svg style="left:70px;top:299px;" width="15" height="12" viewBox="0 -0.647 15 12"><rect x="0.5" y="0.5" width="13" height="8.6" fill="#fff" stroke="#9a9a9a" stroke-width="0.9"/><rect x="0.1" y="0.1" width="13.8" height="2.3" fill="#2d6fb3"/></svg>
<span class="t" style="left:88.7px;top:299.61px;font-size:8.4px;line-height:10.08px;color:#4a4a4a;transform:scaleX(0.8833);">SAPLCSDI - 2150</span>
<span class="t" style="left:220px;top:299.61px;font-size:8.4px;line-height:10.08px;color:#4a4a4a;transform:scaleX(0.9424);">Table Control Material</span>
<span class="t" style="left:717px;top:299.61px;font-size:8.4px;line-height:10.08px;color:#4a4a4a;transform:scaleX(0.8298);">CHAR</span>
<svg style="left:38px;top:315px;" width="11" height="11" viewBox="-0.1 -0.061 11 11"><rect x="0.5" y="0.5" width="8.6" height="8.6" fill="#fff" stroke="#b0b0b0" stroke-width="0.9"/><path d="M2.1 5 L4 6.9 L7.6 2.7" fill="none" stroke="#383838" stroke-width="1.4"/></svg>
<span class="t" style="left:154.5px;top:315.02px;font-size:8.4px;line-height:10.08px;color:#4a4a4a;transform:scaleX(0.8459);">BDC_OKCODE</span>
<span class="t" style="left:220px;top:315.02px;font-size:8.4px;line-height:10.08px;color:#4a4a4a;transform:scaleX(0.9326);">OK Code for this screen</span>
<svg style="left:356px;top:315px;" width="12" height="12" viewBox="-0.5 -0.461 12 12"><g transform="rotate(45 5 5)"><path d="M2.7 -0.6 H7.3 V0.7 L6.5 1.4 V4.2 L8.3 6 V7 H1.7 V6 L3.5 4.2 V1.4 L2.7 0.7 Z" fill="#8b43ad"/><path d="M5 7 V11.2" stroke="#777" stroke-width="0.9"/></g></svg>
<svg style="left:369px;top:315px;" width="24" height="12" viewBox="0 -0.061 24 12"><path d="M0 5 H5.6 M3.2 2.3 L6 5 L3.2 7.7" fill="none" stroke="#3cb371" stroke-width="1.2"/><path d="M8 0.5 H22.3 L16.7 9.3 H8 Z" fill="#00aeef"/></svg>
<span class="t" style="left:406.2px;top:315.02px;font-size:8.4px;line-height:10.08px;color:#4a4a4a;transform:scaleX(0.8854);">=FCUU</span>
<span class="t" style="left:717px;top:315.02px;font-size:8.4px;line-height:10.08px;color:#4a4a4a;transform:scaleX(0.8298);">CHAR</span>
<svg style="left:38px;top:330px;" width="11" height="12" viewBox="-0.1 -0.475 11 12"><rect x="0.5" y="0.5" width="8.6" height="8.6" fill="#fff" stroke="#b0b0b0" stroke-width="0.9"/><path d="M2.1 5 L4 6.9 L7.6 2.7" fill="none" stroke="#383838" stroke-width="1.4"/></svg>
<span class="t" style="left:154.5px;top:330.43px;font-size:8.4px;line-height:10.08px;color:#4a4a4a;transform:scaleX(0.8459);">BDC_CURSOR</span>
<span class="t" style="left:220px;top:330.43px;font-size:8.4px;line-height:10.08px;color:#4a4a4a;transform:scaleX(0.9382);">Cursor location</span>
<svg style="left:356px;top:330px;" width="12" height="12" viewBox="-0.5 -0.875 12 12"><g transform="rotate(45 5 5)"><path d="M2.7 -0.6 H7.3 V0.7 L6.5 1.4 V4.2 L8.3 6 V7 H1.7 V6 L3.5 4.2 V1.4 L2.7 0.7 Z" fill="#8b43ad"/><path d="M5 7 V11.2" stroke="#777" stroke-width="0.9"/></g></svg>
<svg style="left:369px;top:330px;" width="24" height="12" viewBox="0 -0.475 24 12"><path d="M0 5 H5.6 M3.2 2.3 L6 5 L3.2 7.7" fill="none" stroke="#3cb371" stroke-width="1.2"/><path d="M8 0.5 H22.3 L16.7 9.3 H8 Z" fill="#00aeef"/></svg>
<span class="t" style="left:405px;top:330.43px;font-size:8.4px;line-height:10.08px;color:#4a4a4a;transform:scaleX(0.9063);">RC29P-POSN...</span>
<span class="t" style="left:717px;top:330.43px;font-size:8.4px;line-height:10.08px;color:#4a4a4a;transform:scaleX(0.8298);">CHAR</span>
<svg style="left:38px;top:345px;" width="11" height="12" viewBox="-0.1 -0.889 11 12"><rect x="0.5" y="0.5" width="8.6" height="8.6" fill="#fff" stroke="#b0b0b0" stroke-width="0.9"/><path d="M2.1 5 L4 6.9 L7.6 2.7" fill="none" stroke="#383838" stroke-width="1.4"/></svg>
<span class="t" style="left:154.5px;top:345.85px;font-size:8.4px;line-height:10.08px;color:#4a4a4a;transform:scaleX(0.9055);">RC29P-AUSKZ...</span>
<span class="t" style="left:220px;top:345.85px;font-size:8.4px;line-height:10.08px;color:#4a4a4a;transform:scaleX(0.9215);">Selection indicator</span>
<svg style="left:356px;top:346px;" width="12" height="12" viewBox="-0.5 -0.289 12 12"><g transform="rotate(45 5 5)"><path d="M2.7 -0.6 H7.3 V0.7 L6.5 1.4 V4.2 L8.3 6 V7 H1.7 V6 L3.5 4.2 V1.4 L2.7 0.7 Z" fill="#8b43ad"/><path d="M5 7 V11.2" stroke="#777" stroke-width="0.9"/></g></svg>
<svg style="left:369px;top:345px;" width="24" height="12" viewBox="0 -0.889 24 12"><path d="M0 5 H5.6 M3.2 2.3 L6 5 L3.2 7.7" fill="none" stroke="#3cb371" stroke-width="1.2"/><path d="M8 0.5 H22.3 L16.7 9.3 H8 Z" fill="#00aeef"/></svg>
<span class="t" style="left:405px;top:345.85px;font-size:8.4px;line-height:10.08px;color:#4a4a4a;transform:scaleX(0.9000);">X</span>
<span class="t" style="left:717px;top:345.85px;font-size:8.4px;line-height:10.08px;color:#4a4a4a;transform:scaleX(0.8298);">CHAR</span>
<span class="t" style="left:775.83px;top:345.85px;font-size:8.4px;line-height:10.08px;color:#4a4a4a;transform:scaleX(0.8500);">1</span>
<svg style="left:38px;top:361px;" width="11" height="11" viewBox="-0.1 -0.303 11 11"><rect x="0.5" y="0.5" width="8.6" height="8.6" fill="#fff" stroke="#b0b0b0" stroke-width="0.9"/><path d="M2.1 5 L4 6.9 L7.6 2.7" fill="none" stroke="#383838" stroke-width="1.4"/></svg>
<svg style="left:64px;top:360px;" width="19" height="13" viewBox="-0.8 -0.853 19 13"><path d="M0.8 9 V1 H16" fill="none" stroke="#2d6fb3" stroke-width="1.7"/><path d="M-1.2 7 H2.8 L0.8 10 Z" fill="#2d6fb3"/></svg>
<span class="t" style="left:88.7px;top:361.26px;font-size:8.4px;line-height:10.08px;color:#4a4a4a;transform:scaleX(0.9288);">Start Loop</span>
<span class="t" style="left:469.25px;top:361.26px;font-size:8.4px;line-height:10.08px;color:#4a4a4a;transform:scaleX(0.9728);">On Change-Ignore...</span>
<span class="t" style="left:551.2px;top:361.26px;font-size:8.4px;line-height:10.08px;color:#4a4a4a;transform:scaleX(0.9000);">D</span>
<svg style="left:38px;top:376px;" width="11" height="12" viewBox="-0.1 -0.717 11 12"><rect x="0.5" y="0.5" width="8.6" height="8.6" fill="#fff" stroke="#b0b0b0" stroke-width="0.9"/><path d="M2.1 5 L4 6.9 L7.6 2.7" fill="none" stroke="#383838" stroke-width="1.4"/></svg>
<svg style="left:70px;top:376px;" width="15" height="12" viewBox="0 -0.717 15 12"><rect x="0.5" y="0.5" width="13" height="8.6" fill="#fff" stroke="#9a9a9a" stroke-width="0.9"/><rect x="0.1" y="0.1" width="13.8" height="2.3" fill="#2d6fb3"/></svg>
<span class="t" style="left:88.7px;top:376.68px;font-size:8.4px;line-height:10.08px;color:#4a4a4a;transform:scaleX(0.8833);">SAPLCSDI - 0192</span>
<span class="t" style="left:220px;top:376.68px;font-size:8.4px;line-height:10.08px;color:#4a4a4a;transform:scaleX(0.9399);">Table control sub items</span>
<span class="t" style="left:717px;top:376.68px;font-size:8.4px;line-height:10.08px;color:#4a4a4a;transform:scaleX(0.8298);">CHAR</span>
<svg style="left:38px;top:392px;" width="11" height="11" viewBox="-0.1 -0.131 11 11"><rect x="0.5" y="0.5" width="8.6" height="8.6" fill="#fff" stroke="#b0b0b0" stroke-width="0.9"/><path d="M2.1 5 L4 6.9 L7.6 2.7" fill="none" stroke="#383838" stroke-width="1.4"/></svg>
<span class="t" style="left:154.5px;top:392.09px;font-size:8.4px;line-height:10.08px;color:#4a4a4a;transform:scaleX(0.8459);">BDC_OKCODE</span>
<span class="t" style="left:220px;top:392.09px;font-size:8.4px;line-height:10.08px;color:#4a4a4a;transform:scaleX(0.9326);">OK Code for this screen</span>
<svg style="left:356px;top:392px;" width="12" height="12" viewBox="-0.5 -0.531 12 12"><g transform="rotate(45 5 5)"><path d="M2.7 -0.6 H7.3 V0.7 L6.5 1.4 V4.2 L8.3 6 V7 H1.7 V6 L3.5 4.2 V1.4 L2.7 0.7 Z" fill="#8b43ad"/><path d="M5 7 V11.2" stroke="#777" stroke-width="0.9"/></g></svg>
<svg style="left:369px;top:392px;" width="24" height="12" viewBox="0 -0.131 24 12"><path d="M0 5 H5.6 M3.2 2.3 L6 5 L3.2 7.7" fill="none" stroke="#3cb371" stroke-width="1.2"/><path d="M8 0.5 H22.3 L16.7 9.3 H8 Z" fill="#00aeef"/></svg>
<span class="t" style="left:406.2px;top:392.09px;font-size:8.4px;line-height:10.08px;color:#4a4a4a;transform:scaleX(0.8380);">=MALL</span>
<span class="t" style="left:717px;top:392.09px;font-size:8.4px;line-height:10.08px;color:#4a4a4a;transform:scaleX(0.8298);">CHAR</span>
<svg style="left:38px;top:407px;" width="11" height="12" viewBox="-0.1 -0.545 11 12"><rect x="0.5" y="0.5" width="8.6" height="8.6" fill="#fff" stroke="#b0b0b0" stroke-width="0.9"/><path d="M2.1 5 L4 6.9 L7.6 2.7" fill="none" stroke="#383838" stroke-width="1.4"/></svg>
<svg style="left:70px;top:407px;" width="15" height="12" viewBox="0 -0.545 15 12"><rect x="0.5" y="0.5" width="13" height="8.6" fill="#fff" stroke="#9a9a9a" stroke-width="0.9"/><rect x="0.1" y="0.1" width="13.8" height="2.3" fill="#2d6fb3"/></svg>
<span class="t" style="left:88.7px;top:407.5px;font-size:8.4px;line-height:10.08px;color:#4a4a4a;transform:scaleX(0.8833);">SAPLCSDI - 0192</span>
<span class="t" style="left:220px;top:407.5px;font-size:8.4px;line-height:10.08px;color:#4a4a4a;transform:scaleX(0.9399);">Table control sub items</span>
<span class="t" style="left:717px;top:407.5px;font-size:8.4px;line-height:10.08px;color:#4a4a4a;transform:scaleX(0.8298);">CHAR</span>
<svg style="left:38px;top:422px;" width="11" height="12" viewBox="-0.1 -0.959 11 12"><rect x="0.5" y="0.5" width="8.6" height="8.6" fill="#fff" stroke="#b0b0b0" stroke-width="0.9"/><path d="M2.1 5 L4 6.9 L7.6 2.7" fill="none" stroke="#383838" stroke-width="1.4"/></svg>
<span class="t" style="left:154.5px;top:422.92px;font-size:8.4px;line-height:10.08px;color:#4a4a4a;transform:scaleX(0.8459);">BDC_CURSOR</span>
<span class="t" style="left:220px;top:422.92px;font-size:8.4px;line-height:10.08px;color:#4a4a4a;transform:scaleX(0.9382);">Cursor location</span>
<svg style="left:356px;top:423px;" width="12" height="12" viewBox="-0.5 -0.359 12 12"><g transform="rotate(45 5 5)"><path d="M2.7 -0.6 H7.3 V0.7 L6.5 1.4 V4.2 L8.3 6 V7 H1.7 V6 L3.5 4.2 V1.4 L2.7 0.7 Z" fill="#8b43ad"/><path d="M5 7 V11.2" stroke="#777" stroke-width="0.9"/></g></svg>
<svg style="left:369px;top:422px;" width="24" height="12" viewBox="0 -0.959 24 12"><path d="M0 5 H5.6 M3.2 2.3 L6 5 L3.2 7.7" fill="none" stroke="#3cb371" stroke-width="1.2"/><path d="M8 0.5 H22.3 L16.7 9.3 H8 Z" fill="#00aeef"/></svg>
<span class="t" style="left:405px;top:422.92px;font-size:8.4px;line-height:10.08px;color:#4a4a4a;transform:scaleX(0.9206);">RC29U-UPTX...</span>
<span class="t" style="left:717px;top:422.92px;font-size:8.4px;line-height:10.08px;color:#4a4a4a;transform:scaleX(0.8298);">CHAR</span>
<svg style="left:38px;top:438px;" width="11" height="11" viewBox="-0.1 -0.373 11 11"><rect x="0.5" y="0.5" width="8.6" height="8.6" fill="#fff" stroke="#b0b0b0" stroke-width="0.9"/><path d="M2.1 5 L4 6.9 L7.6 2.7" fill="none" stroke="#383838" stroke-width="1.4"/></svg>
<span class="t" style="left:154.5px;top:438.33px;font-size:8.4px;line-height:10.08px;color:#4a4a4a;transform:scaleX(0.8459);">BDC_OKCODE</span>
<span class="t" style="left:220px;top:438.33px;font-size:8.4px;line-height:10.08px;color:#4a4a4a;transform:scaleX(0.9326);">OK Code for this screen</span>
<svg style="left:356px;top:438px;" width="12" height="12" viewBox="-0.5 -0.773 12 12"><g transform="rotate(45 5 5)"><path d="M2.7 -0.6 H7.3 V0.7 L6.5 1.4 V4.2 L8.3 6 V7 H1.7 V6 L3.5 4.2 V1.4 L2.7 0.7 Z" fill="#8b43ad"/><path d="M5 7 V11.2" stroke="#777" stroke-width="0.9"/></g></svg>
<svg style="left:369px;top:438px;" width="24" height="12" viewBox="0 -0.373 24 12"><path d="M0 5 H5.6 M3.2 2.3 L6 5 L3.2 7.7" fill="none" stroke="#3cb371" stroke-width="1.2"/><path d="M8 0.5 H22.3 L16.7 9.3 H8 Z" fill="#00aeef"/></svg>
<span class="t" style="left:406.2px;top:438.33px;font-size:8.4px;line-height:10.08px;color:#4a4a4a;transform:scaleX(0.8847);">=ERFA</span>
<span class="t" style="left:717px;top:438.33px;font-size:8.4px;line-height:10.08px;color:#4a4a4a;transform:scaleX(0.8298);">CHAR</span>
<svg style="left:38px;top:453px;" width="11" height="12" viewBox="-0.1 -0.787 11 12"><rect x="0.5" y="0.5" width="8.6" height="8.6" fill="#fff" stroke="#b0b0b0" stroke-width="0.9"/><path d="M2.1 5 L4 6.9 L7.6 2.7" fill="none" stroke="#383838" stroke-width="1.4"/></svg>
<span class="t" style="left:154.5px;top:453.75px;font-size:8.4px;line-height:10.08px;color:#4a4a4a;transform:scaleX(0.9199);">RC29U-EBOR...</span>
<span class="t" style="left:220px;top:453.75px;font-size:8.4px;line-height:10.08px;color:#4a4a4a;transform:scaleX(0.9469);">Installation Point for Subitem</span>
<svg style="left:357px;top:453px;" width="12" height="12" viewBox="0 -0.787 12 12"><path d="M0 1.2 L6.6 0 V10 L0 8.8 Z" fill="#1e7145"/><rect x="6.2" y="1" width="4.6" height="8" fill="#fff" stroke="#1e7145" stroke-width="0.9"/><path d="M6.2 3.6 H10.8 M6.2 6.3 H10.8 M8.6 1 V9" stroke="#1e7145" stroke-width="0.8"/><path d="M1.9 3.1 L4.7 6.9 M4.7 3.1 L1.9 6.9" stroke="#fff" stroke-width="1.1"/></svg>
<svg style="left:369px;top:453px;" width="24" height="12" viewBox="0 -0.787 24 12"><path d="M0 5 H5.6 M3.2 2.3 L6 5 L3.2 7.7" fill="none" stroke="#3cb371" stroke-width="1.2"/><path d="M8 0.5 H22.3 L16.7 9.3 H8 Z" fill="#00aeef"/></svg>
<span class="t" style="left:405px;top:453.75px;font-size:8.4px;line-height:10.08px;color:#4a4a4a;transform:scaleX(0.9000);">E</span>
<span class="t" style="left:469.25px;top:453.75px;font-size:8.4px;line-height:10.08px;color:#4a4a4a;transform:scaleX(0.9278);">Line Item Only</span>
<span class="t" style="left:717px;top:453.75px;font-size:8.4px;line-height:10.08px;color:#4a4a4a;transform:scaleX(0.8298);">CHAR</span>
<span class="t" style="left:771.86px;top:453.75px;font-size:8.4px;line-height:10.08px;color:#4a4a4a;transform:scaleX(0.8500);">20</span>
<svg style="left:38px;top:469px;" width="11" height="11" viewBox="-0.1 -0.201 11 11"><rect x="0.5" y="0.5" width="8.6" height="8.6" fill="#fff" stroke="#b0b0b0" stroke-width="0.9"/><path d="M2.1 5 L4 6.9 L7.6 2.7" fill="none" stroke="#383838" stroke-width="1.4"/></svg>
<span class="t" style="left:154.5px;top:469.16px;font-size:8.4px;line-height:10.08px;color:#4a4a4a;transform:scaleX(0.9062);">RC29U-UPMN...</span>
<span class="t" style="left:220px;top:469.16px;font-size:8.4px;line-height:10.08px;color:#4a4a4a;transform:scaleX(0.9485);">Sub-item quantity</span>
<svg style="left:357px;top:469px;" width="12" height="12" viewBox="0 -0.201 12 12"><path d="M0 1.2 L6.6 0 V10 L0 8.8 Z" fill="#1e7145"/><rect x="6.2" y="1" width="4.6" height="8" fill="#fff" stroke="#1e7145" stroke-width="0.9"/><path d="M6.2 3.6 H10.8 M6.2 6.3 H10.8 M8.6 1 V9" stroke="#1e7145" stroke-width="0.8"/><path d="M1.9 3.1 L4.7 6.9 M4.7 3.1 L1.9 6.9" stroke="#fff" stroke-width="1.1"/></svg>
<svg style="left:369px;top:469px;" width="24" height="12" viewBox="0 -0.201 24 12"><path d="M0 5 H5.6 M3.2 2.3 L6 5 L3.2 7.7" fill="none" stroke="#3cb371" stroke-width="1.2"/><path d="M8 0.5 H22.3 L16.7 9.3 H8 Z" fill="#00aeef"/></svg>
<span class="t" style="left:405px;top:469.16px;font-size:8.4px;line-height:10.08px;color:#4a4a4a;transform:scaleX(0.9000);">F</span>
<span class="t" style="left:469.25px;top:469.16px;font-size:8.4px;line-height:10.08px;color:#4a4a4a;transform:scaleX(0.9278);">Line Item Only</span>
<span class="t" style="left:717px;top:469.16px;font-size:8.4px;line-height:10.08px;color:#4a4a4a;transform:scaleX(0.7894);">BCD</span>
<span class="t" style="left:765.5px;top:469.16px;font-size:8.4px;line-height:10.08px;color:#4a4a4a;transform:scaleX(0.8747);">13.3</span>
<svg style="left:38px;top:484px;" width="11" height="12" viewBox="-0.1 -0.615 11 12"><rect x="0.5" y="0.5" width="8.6" height="8.6" fill="#fff" stroke="#b0b0b0" stroke-width="0.9"/><path d="M2.1 5 L4 6.9 L7.6 2.7" fill="none" stroke="#383838" stroke-width="1.4"/></svg>
<span class="t" style="left:154.5px;top:484.57px;font-size:8.4px;line-height:10.08px;color:#4a4a4a;transform:scaleX(0.9188);">RC29U-UPTXT...</span>
<span class="t" style="left:220px;top:484.57px;font-size:8.4px;line-height:10.08px;color:#4a4a4a;transform:scaleX(0.9382);">BOM sub-item text</span>
<svg style="left:357px;top:484px;" width="12" height="12" viewBox="0 -0.615 12 12"><path d="M0 1.2 L6.6 0 V10 L0 8.8 Z" fill="#1e7145"/><rect x="6.2" y="1" width="4.6" height="8" fill="#fff" stroke="#1e7145" stroke-width="0.9"/><path d="M6.2 3.6 H10.8 M6.2 6.3 H10.8 M8.6 1 V9" stroke="#1e7145" stroke-width="0.8"/><path d="M1.9 3.1 L4.7 6.9 M4.7 3.1 L1.9 6.9" stroke="#fff" stroke-width="1.1"/></svg>
<svg style="left:369px;top:484px;" width="24" height="12" viewBox="0 -0.615 24 12"><path d="M0 5 H5.6 M3.2 2.3 L6 5 L3.2 7.7" fill="none" stroke="#3cb371" stroke-width="1.2"/><path d="M8 0.5 H22.3 L16.7 9.3 H8 Z" fill="#00aeef"/></svg>
<span class="t" style="left:405px;top:484.57px;font-size:8.4px;line-height:10.08px;color:#4a4a4a;transform:scaleX(0.9000);">G</span>
<span class="t" style="left:469.25px;top:484.57px;font-size:8.4px;line-height:10.08px;color:#4a4a4a;transform:scaleX(0.9278);">Line Item Only</span>
<span class="t" style="left:717px;top:484.57px;font-size:8.4px;line-height:10.08px;color:#4a4a4a;transform:scaleX(0.8298);">CHAR</span>
<span class="t" style="left:771.86px;top:484.57px;font-size:8.4px;line-height:10.08px;color:#4a4a4a;transform:scaleX(0.8500);">40</span>
<svg style="left:38px;top:500px;" width="11" height="11" viewBox="-0.1 -0.029 11 11"><rect x="0.5" y="0.5" width="8.6" height="8.6" fill="#fff" stroke="#b0b0b0" stroke-width="0.9"/><path d="M2.1 5 L4 6.9 L7.6 2.7" fill="none" stroke="#383838" stroke-width="1.4"/></svg>
<svg style="left:64px;top:499px;" width="19" height="13" viewBox="-0.8 -0.629 19 13"><path d="M0.8 1 V9.4 H16" fill="none" stroke="#2d6fb3" stroke-width="1.7"/><path d="M-1.2 3.2 H2.8 L0.8 0.2 Z" fill="#2d6fb3"/></svg>
<span class="t" style="left:88.7px;top:499.99px;font-size:8.4px;line-height:10.08px;color:#4a4a4a;transform:scaleX(0.8758);">End Loop</span>
<svg style="left:38px;top:515px;" width="11" height="12" viewBox="-0.1 -0.443 11 12"><rect x="0.5" y="0.5" width="8.6" height="8.6" fill="#fff" stroke="#b0b0b0" stroke-width="0.9"/><path d="M2.1 5 L4 6.9 L7.6 2.7" fill="none" stroke="#383838" stroke-width="1.4"/></svg>
<svg style="left:70px;top:515px;" width="15" height="12" viewBox="0 -0.443 15 12"><rect x="0.5" y="0.5" width="13" height="8.6" fill="#fff" stroke="#9a9a9a" stroke-width="0.9"/><rect x="0.1" y="0.1" width="13.8" height="2.3" fill="#2d6fb3"/></svg>
<span class="t" style="left:88.7px;top:515.4px;font-size:8.4px;line-height:10.08px;color:#4a4a4a;transform:scaleX(0.8833);">SAPLCSDI - 0192</span>
<span class="t" style="left:220px;top:515.4px;font-size:8.4px;line-height:10.08px;color:#4a4a4a;transform:scaleX(0.9399);">Table control sub items</span>
<span class="t" style="left:717px;top:515.4px;font-size:8.4px;line-height:10.08px;color:#4a4a4a;transform:scaleX(0.8298);">CHAR</span>
<svg style="left:38px;top:530px;" width="11" height="12" viewBox="-0.1 -0.857 11 12"><rect x="0.5" y="0.5" width="8.6" height="8.6" fill="#fff" stroke="#b0b0b0" stroke-width="0.9"/><path d="M2.1 5 L4 6.9 L7.6 2.7" fill="none" stroke="#383838" stroke-width="1.4"/></svg>
<span class="t" style="left:154.5px;top:530.82px;font-size:8.4px;line-height:10.08px;color:#4a4a4a;transform:scaleX(0.8459);">BDC_OKCODE</span>
<span class="t" style="left:220px;top:530.82px;font-size:8.4px;line-height:10.08px;color:#4a4a4a;transform:scaleX(0.9326);">OK Code for this screen</span>
<svg style="left:356px;top:531px;" width="12" height="12" viewBox="-0.5 -0.257 12 12"><g transform="rotate(45 5 5)"><path d="M2.7 -0.6 H7.3 V0.7 L6.5 1.4 V4.2 L8.3 6 V7 H1.7 V6 L3.5 4.2 V1.4 L2.7 0.7 Z" fill="#8b43ad"/><path d="M5 7 V11.2" stroke="#777" stroke-width="0.9"/></g></svg>
<svg style="left:369px;top:530px;" width="24" height="12" viewBox="0 -0.857 24 12"><path d="M0 5 H5.6 M3.2 2.3 L6 5 L3.2 7.7" fill="none" stroke="#3cb371" stroke-width="1.2"/><path d="M8 0.5 H22.3 L16.7 9.3 H8 Z" fill="#00aeef"/></svg>
<span class="t" style="left:406.2px;top:530.82px;font-size:8.4px;line-height:10.08px;color:#4a4a4a;transform:scaleX(0.9000);">=BACK</span>
<span class="t" style="left:717px;top:530.82px;font-size:8.4px;line-height:10.08px;color:#4a4a4a;transform:scaleX(0.8298);">CHAR</span>
<svg style="left:38px;top:546px;" width="11" height="11" viewBox="-0.1 -0.271 11 11"><rect x="0.5" y="0.5" width="8.6" height="8.6" fill="#fff" stroke="#b0b0b0" stroke-width="0.9"/><path d="M2.1 5 L4 6.9 L7.6 2.7" fill="none" stroke="#383838" stroke-width="1.4"/></svg>
<svg style="left:64px;top:545px;" width="19" height="13" viewBox="-0.8 -0.871 19 13"><path d="M0.8 1 V9.4 H16" fill="none" stroke="#2d6fb3" stroke-width="1.7"/><path d="M-1.2 3.2 H2.8 L0.8 0.2 Z" fill="#2d6fb3"/></svg>
<span class="t" style="left:88.7px;top:546.23px;font-size:8.4px;line-height:10.08px;color:#4a4a4a;transform:scaleX(0.8758);">End Loop</span>
<svg style="left:38px;top:561px;" width="11" height="12" viewBox="-0.1 -0.685 11 12"><rect x="0.5" y="0.5" width="8.6" height="8.6" fill="#fff" stroke="#b0b0b0" stroke-width="0.9"/><path d="M2.1 5 L4 6.9 L7.6 2.7" fill="none" stroke="#383838" stroke-width="1.4"/></svg>
<svg style="left:70px;top:561px;" width="15" height="12" viewBox="0 -0.685 15 12"><rect x="0.5" y="0.5" width="13" height="8.6" fill="#fff" stroke="#9a9a9a" stroke-width="0.9"/><rect x="0.1" y="0.1" width="13.8" height="2.3" fill="#2d6fb3"/></svg>
<span class="t" style="left:88.7px;top:561.64px;font-size:8.4px;line-height:10.08px;color:#4a4a4a;transform:scaleX(0.8833);">SAPLCSDI - 2150</span>
<span class="t" style="left:220px;top:561.64px;font-size:8.4px;line-height:10.08px;color:#4a4a4a;transform:scaleX(0.9424);">Table Control Material</span>
<span class="t" style="left:717px;top:561.64px;font-size:8.4px;line-height:10.08px;color:#4a4a4a;transform:scaleX(0.8298);">CHAR</span>
<svg style="left:38px;top:577px;" width="11" height="11" viewBox="-0.1 -0.099 11 11"><rect x="0.5" y="0.5" width="8.6" height="8.6" fill="#fff" stroke="#b0b0b0" stroke-width="0.9"/><path d="M2.1 5 L4 6.9 L7.6 2.7" fill="none" stroke="#383838" stroke-width="1.4"/></svg>
<span class="t" style="left:154.5px;top:577.06px;font-size:8.4px;line-height:10.08px;color:#4a4a4a;transform:scaleX(0.8459);">BDC_OKCODE</span>
<span class="t" style="left:220px;top:577.06px;font-size:8.4px;line-height:10.08px;color:#4a4a4a;transform:scaleX(0.9326);">OK Code for this screen</span>
<svg style="left:356px;top:577px;" width="12" height="12" viewBox="-0.5 -0.499 12 12"><g transform="rotate(45 5 5)"><path d="M2.7 -0.6 H7.3 V0.7 L6.5 1.4 V4.2 L8.3 6 V7 H1.7 V6 L3.5 4.2 V1.4 L2.7 0.7 Z" fill="#8b43ad"/><path d="M5 7 V11.2" stroke="#777" stroke-width="0.9"/></g></svg>
<svg style="left:369px;top:577px;" width="24" height="12" viewBox="0 -0.099 24 12"><path d="M0 5 H5.6 M3.2 2.3 L6 5 L3.2 7.7" fill="none" stroke="#3cb371" stroke-width="1.2"/><path d="M8 0.5 H22.3 L16.7 9.3 H8 Z" fill="#00aeef"/></svg>
<span class="t" style="left:406.2px;top:577.06px;font-size:8.4px;line-height:10.08px;color:#4a4a4a;transform:scaleX(0.9000);">=FCBU</span>
<span class="t" style="left:717px;top:577.06px;font-size:8.4px;line-height:10.08px;color:#4a4a4a;transform:scaleX(0.8298);">CHAR</span>
<svg style="left:37px;top:128px;" width="12" height="12" viewBox="-0.9 -0.5 12 12"><rect x="0.5" y="0.5" width="8.6" height="8.6" fill="#fff" stroke="#b0b0b0" stroke-width="0.9"/><rect x="2.3" y="2.3" width="5" height="5" fill="#333"/></svg>
<div style="left:139px;top:127px;width:12px;height:15px;background:#ececec;box-sizing:border-box;border:1px solid #b9b9b9;"></div>
<svg style="left:141px;top:131px;" width="9" height="7" viewBox="-0.6 -0.8 9 7"><path d="M0.6 0.8 L3.4 3.8 L6.2 0.8" fill="none" stroke="#606060" stroke-width="1.3"/></svg>
<svg style="left:9px;top:131px;" width="6" height="8" viewBox="-0.6 -0.4 6 8"><circle cx="2" cy="1.8" r="1.25" fill="none" stroke="#555" stroke-width="0.9"/><path d="M2 3 V6" stroke="#555" stroke-width="0.9"/></svg>
<svg style="left:9px;top:114px;" width="14" height="14" viewBox="0 -0.4 14 14"><rect x="0.4" y="0.4" width="10.2" height="9.2" fill="#3f74b8" stroke="#1d3f72" stroke-width="0.9"/><rect x="1.8" y="1.6" width="7.4" height="6.6" fill="#6a97d2"/><rect x="3.3" y="3.2" width="8.8" height="8.6" fill="#78902a" stroke="#55681a" stroke-width="0.8"/><rect x="4.5" y="6" width="6.4" height="2" fill="#fff"/><rect x="4.5" y="8.9" width="6.4" height="1.8" fill="#eef3d6"/></svg>
<svg style="left:51px;top:114px;" width="8" height="8" viewBox="-0.5 -0.4 8 8"><path d="M0 0.2 H5.6 L3.4 2.7 V5.4 L2.2 4.6 V2.7 Z" fill="#3394e2"/></svg>
<div style="left:782.85px;top:126.3px;width:12.35px;height:467.5px;background:#ebebeb;"></div>
<div style="left:782.85px;top:168.1px;width:12.35px;height:413.6px;background:#cbcbcb;"></div>
<svg style="left:785px;top:131px;" width="8" height="6" viewBox="-0.8 -0.4 8 6"><path d="M0.6 3.6 L3 1 L5.4 3.6" fill="none" stroke="#5a5a5a" stroke-width="1.1"/></svg>
<svg style="left:785px;top:586px;" width="8" height="6" viewBox="-0.8 0 8 6"><path d="M0.6 0.8 L3 3.4 L5.4 0.8" fill="none" stroke="#5a5a5a" stroke-width="1.1"/></svg>
<div style="left:4.9px;top:590.31px;width:777.7px;height:3.49px;background:#ffffff;"></div>
<svg style="left:786px;top:108px;" width="14" height="15" viewBox="0 -0.6 14 15"><path d="M1.2 6 V3.6 A2.6 2.6 0 0 1 6.4 3.6 V5.6" fill="none" stroke="#f5a623" stroke-width="1.3"/><rect x="4" y="5.6" width="8.2" height="6.4" fill="#f5a623"/><rect x="7.6" y="7.4" width="1.1" height="2.8" fill="#fff"/></svg>
<svg style="left:25px;top:188px;" width="574" height="374" viewBox="-0.55 -0.5 574 374"><rect x="0.72" y="0.72" width="570.15" height="370.85" fill="none" stroke="#ff0000" stroke-width="1.45"/></svg>
<svg style="left:29px;top:357px;" width="562" height="174" viewBox="-0.75 -0.45 562 174"><rect x="0.75" y="0.75" width="558.55" height="170.3" fill="none" stroke="#ff0000" stroke-width="1.5"/></svg>
<svg style="left:0;top:0;pointer-events:none" width="800" height="600" viewBox="0 0 800 600"><path d="M631.5 221.3 H695.9 V243.4 H653.5 L596.8 277.4 L640.4 243.4 H631.5 Z" fill="#1cc3fb" stroke="#117fa9" stroke-width="1.6" stroke-linejoin="miter"/></svg>
<span class="t" style="left:640.4px;top:227.22px;font-size:9.8px;line-height:11.76px;color:#fff;transform:scaleX(0.9512);font-weight:bold;">Main Loop</span>
<svg style="left:0;top:0;pointer-events:none" width="800" height="600" viewBox="0 0 800 600"><path d="M496.7 301.5 H560.8 V323.6 H516.8 L469.8 357.5 L506.4 323.6 H496.7 Z" fill="#1cc3fb" stroke="#117fa9" stroke-width="1.6" stroke-linejoin="miter"/></svg>
<span class="t" style="left:505px;top:307.32px;font-size:9.8px;line-height:11.76px;color:#fff;transform:scaleX(0.9481);font-weight:bold;">Inner Loop</span>
<div style="left:0px;top:0px;width:800px;height:1px;background:#1b80a9;"></div>
<div style="left:0px;top:0px;width:1px;height:600px;background:#1b80a9;"></div>
<div style="left:799px;top:0px;width:1px;height:600px;background:#1b80a9;"></div>
<div style="left:0px;top:598.8px;width:800px;height:1.2px;background:#1b80a9;"></div>
</div></body></html>
